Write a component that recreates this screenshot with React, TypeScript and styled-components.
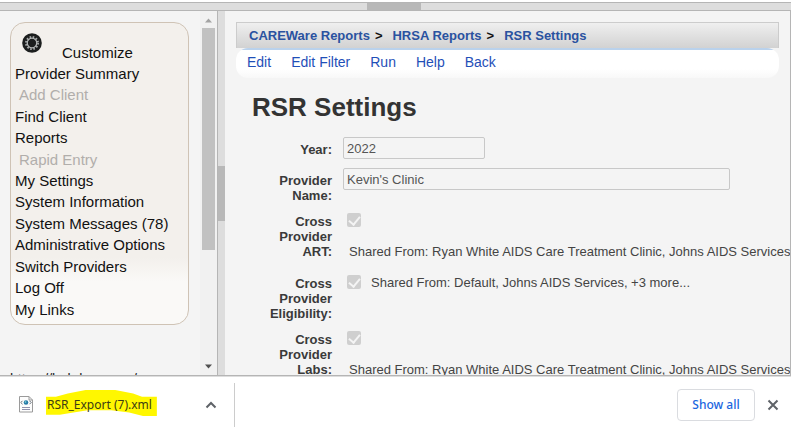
import React from "react";
import styled, { createGlobalStyle } from "styled-components";

const Global = createGlobalStyle`
  * { box-sizing: border-box; }
  html, body { margin: 0; background: #fff; }
  body { font-family: "Liberation Sans", Arial, sans-serif; overflow: hidden; }
  button, input { font-family: inherit; margin: 0; }
`;

const Page = styled.div`
  display: flex;
  flex-direction: column;
  height: 100vh;
  padding-top: 2px;
`;

const Handle = styled.span<{ $vertical?: boolean }>`
  background: #b8b8b8;
  width: ${(p) => (p.$vertical ? "100%" : "54px")};
  height: ${(p) => (p.$vertical ? "55px" : "100%")};
`;

const TopSplitter = styled.div`
  display: flex;
  justify-content: center;
  flex: none;
  height: 9px;
  padding-right: 3px;
  background: #ddd;
  border: solid #b5b5b5;
  border-width: 1px 0;
`;

const SideSplitter = styled.div`
  display: flex;
  align-items: center;
  flex: none;
  width: 8px;
  background: #ddd;
  border-left: 1px solid #b5b5b5;
`;

const Workspace = styled.div`
  display: flex;
  flex: 1;
  min-height: 0;
  border-bottom: 1px solid #b5b5b5;
`;

const Sidebar = styled.aside`
  display: flex;
  flex: none;
  width: 217px;
  background: #f4f4f4;
`;

const SidebarBody = styled.div`
  flex: 1;
  min-width: 0;
  overflow: hidden;
  padding: 11px 11px 0 10px;
`;

const MenuPanel = styled.nav`
  display: flex;
  flex-direction: column;
  min-height: 303px;
  padding: 8px 4px 4px;
  border: 1px solid #cfc3b5;
  border-radius: 15px;
  background: linear-gradient(#f3f0ec 0, #f3f0ec 78%, #faf9f7 86%, #faf9f7);
`;

const MenuHead = styled.div`
  display: flex;
  align-items: flex-start;
  gap: 19px;
  height: 32px;
  padding-left: 6px;
`;

const MenuList = styled.ul`
  display: grid;
  grid-auto-rows: 1fr;
  flex: 1;
  margin: 0;
  padding: 0;
  list-style: none;
`;

const MenuLink = styled.a<{ $muted?: boolean }>`
  display: block;
  padding-left: ${(p) => (p.$muted ? "4px" : "0")};
  font-size: 15px;
  line-height: 21px;
  white-space: nowrap;
  color: ${(p) => (p.$muted ? "#b1aeab" : "#111")};
  text-decoration: none;
`;

const HeadLink = styled(MenuLink)`
  align-self: flex-end;
`;

const StatusUrl = styled.div`
  margin-top: 44px;
  font-size: 14px;
  line-height: 20px;
  white-space: nowrap;
  color: #222;
`;

const ScrollTrack = styled.div`
  display: flex;
  flex-direction: column;
  align-items: center;
  flex: none;
  width: 17px;
  padding: 7px 0 6px;
  background: #f1f1f1;
`;

const ScrollThumb = styled.div`
  width: 13px;
  height: 222px;
  margin: 5px 0 auto;
  background: #c1c1c1;
`;

const Content = styled.main`
  flex: 1;
  min-width: 0;
  overflow: hidden;
  padding: 11px 0 0 11px;
  background: #f4f4f4;
  border-right: 1px solid #b5b5b5;
`;

const Crumbs = styled.nav`
  display: flex;
  align-items: center;
  height: 26px;
  margin-right: 11px;
  padding-left: 12px;
  border: 1px solid #ccc;
  border-bottom: 0;
  background: linear-gradient(#efefef, #d2d2d2);
  font-size: 13px;
  font-weight: bold;
  white-space: nowrap;
`;

const Crumb = styled.a`
  color: #2a52a0;
  text-decoration: none;
`;

const CrumbArrow = styled.span`
  margin: 0 10px 0 5px;
  color: #111;
`;

const Toolbar = styled.div`
  display: flex;
  gap: 20px;
  height: 30px;
  margin-right: 11px;
  padding: 0 11px 2px;
  border-radius: 12px;
  background: linear-gradient(#bad2ec 2px, #fff 2px, #fff 70%, #f8f8f8);
`;

const ToolButton = styled.button`
  padding: 0;
  border: 0;
  background: none;
  font-size: 14px;
  line-height: 24px;
  color: #1f4fb8;
`;

const Title = styled.h1`
  margin: 14px 0 15px 16px;
  font-size: 26px;
  line-height: 30px;
  color: #333;
`;

const Form = styled.form`
  display: grid;
  grid-template-columns: 96px minmax(0, 1fr);
  column-gap: 11px;
  font-size: 13px;
  line-height: 15px;
  color: #444;
`;

const Label = styled.label<{ $bottom: number }>`
  padding: 5px 0 ${(p) => p.$bottom}px 20px;
  font-weight: bold;
  text-align: right;
  color: #3a3a3a;
`;

const Field = styled.div`
  min-width: 0;
`;

const TextInput = styled.input<{ $wide?: boolean }>`
  display: block;
  width: ${(p) => (p.$wide ? "387px" : "142px")};
  max-width: 100%;
  height: 22px;
  padding: 0 3px;
  border: 1px solid #c8c8c8;
  border-radius: 2px;
  background: #f4f4f4;
  font-size: 13px;
  color: #555;
`;

const CheckField = styled(Field)<{ $stacked?: boolean }>`
  display: flex;
  flex-direction: ${(p) => (p.$stacked ? "column" : "row")};
  gap: ${(p) => (p.$stacked ? "17px" : "10px")};
  padding: 4px 0 0 4px;
  white-space: nowrap;
`;

const SharedFrom = styled.span<{ $indent?: boolean }>`
  padding-left: ${(p) => (p.$indent ? "2px" : "0")};
`;

const CheckBox = styled.input`
  appearance: none;
  flex: none;
  width: 14px;
  height: 14px;
  border-radius: 2px;
  background: #cfcfcf;
  display: grid;
  place-items: center;

  &::before {
    content: "";
    width: 9px;
    height: 5px;
    margin-bottom: 2px;
    border: solid #f4f4f4;
    border-width: 0 0 2px 2px;
    transform: rotate(-50deg);
  }
`;

const Shelf = styled.footer`
  display: flex;
  align-items: center;
  flex: none;
  height: 56px;
  border-top: 1px solid #ddd;
  background: #fff;
  font-family: "Noto Sans", "Open Sans", sans-serif;
`;

const Download = styled.div`
  display: flex;
  align-items: center;
  width: 235px;
  height: 44px;
  padding: 0 17px 0 19px;
  border-right: 1px solid #ccc;
`;

const FileLink = styled.a`
  position: relative;
  margin-left: 13px;
  padding: 0 1px;
  font-size: 12px;
  line-height: 18px;
  color: #3c3c14;
  text-decoration: none;
  white-space: nowrap;
`;

const Marker = styled.svg`
  position: absolute;
  inset: -6px -4px -3px 0;
  width: calc(100% + 4px);
  height: calc(100% + 9px);
`;

const FileName = styled.span`
  position: relative;
`;

const IconButton = styled.button`
  display: flex;
  padding: 0;
  border: 0;
  background: none;
`;

const MoreButton = styled(IconButton)`
  margin-left: auto;
`;

const ShowAll = styled.button`
  width: 78px;
  height: 32px;
  margin: 0 12px 0 auto;
  border: 1px solid #dadce0;
  border-radius: 4px;
  background: #fff;
  font-size: 12px;
  font-weight: 500;
  color: #1a66e0;
`;

const CloseButton = styled(IconButton)`
  margin-right: 12px;
`;

const menu: { text: string; muted?: boolean }[] = [
  { text: "Provider Summary" },
  { text: "Add Client", muted: true },
  { text: "Find Client" },
  { text: "Reports" },
  { text: "Rapid Entry", muted: true },
  { text: "My Settings" },
  { text: "System Information" },
  { text: "System Messages (78)" },
  { text: "Administrative Options" },
  { text: "Switch Providers" },
  { text: "Log Off" },
  { text: "My Links" },
];

const GearIcon = () => (
  <svg width="22" height="22" viewBox="0 0 22 22" aria-hidden="true">
    <circle cx="11" cy="12" r="9.8" fill="#1c1e1e" />
    <circle cx="11" cy="12" r="6.1" fill="none" stroke="#a9acac" strokeWidth="1.8" strokeDasharray="1.6 1.594" />
    <circle cx="11" cy="12" r="4.8" fill="none" stroke="#b4b7b7" strokeWidth="1.3" />
  </svg>
);

const XmlFileIcon = () => (
  <svg width="14" height="17" viewBox="0 0 14 17" aria-hidden="true">
    <path d="M.5.5h9.500l3.500 3.500v12H.5z" fill="#fdfdfd" stroke="#9a9a9a" />
    <path d="M10 .5V4h3.500" fill="none" stroke="#9a9a9a" />
    <path d="M3.500 4.800 1.800 6.500l1.700 1.700M10.500 4.800l1.700 1.700-1.700 1.700" fill="none" stroke="#666e78" />
    <circle cx="7" cy="6.500" r="2.300" fill="#2579a8" />
    <circle cx="6.500" cy="6" r=".9" fill="#6fc3c9" />
    <path d="M3 11.500h8M3 13.500h8" stroke="#9292ae" />
  </svg>
);

const App: React.FC = () => (
  <Page>
    <Global />
    <TopSplitter><Handle /></TopSplitter>
    <Workspace>
      <Sidebar>
        <SidebarBody>
          <MenuPanel aria-label="Main">
            <MenuHead>
              <GearIcon />
              <HeadLink href="#customize">Customize</HeadLink>
            </MenuHead>
            <MenuList>
              {menu.map((m) => (
                <li key={m.text}>
                  <MenuLink href="#menu" $muted={m.muted}>{m.text}</MenuLink>
                </li>
              ))}
            </MenuList>
          </MenuPanel>
          <StatusUrl>https://hab.hrsa.gov/</StatusUrl>
        </SidebarBody>
        <ScrollTrack>
          <svg width="7" height="5" viewBox="0 0 7 5" aria-hidden="true"><path d="M0 4.500 3.500.5 7 4.500z" fill="#a3a3a3" /></svg>
          <ScrollThumb />
          <svg width="7" height="5" viewBox="0 0 7 5" aria-hidden="true"><path d="M0 .5h7L3.500 4.500z" fill="#505050" /></svg>
        </ScrollTrack>
      </Sidebar>
      <SideSplitter><Handle $vertical /></SideSplitter>
      <Content>
        <Crumbs aria-label="Breadcrumb">
          <Crumb href="#reports">CAREWare Reports</Crumb>
          <CrumbArrow>&gt;</CrumbArrow>
          <Crumb href="#hrsa">HRSA Reports</Crumb>
          <CrumbArrow>&gt;</CrumbArrow>
          <Crumb href="#rsr">RSR Settings</Crumb>
        </Crumbs>
        <Toolbar>
          {["Edit", "Edit Filter", "Run", "Help", "Back"].map((t) => (
            <ToolButton key={t} type="button">{t}</ToolButton>
          ))}
        </Toolbar>
        <Title>RSR Settings</Title>
        <Form>
          <Label htmlFor="year" $bottom={11}>Year:</Label>
          <Field><TextInput id="year" defaultValue="2022" disabled /></Field>
          <Label htmlFor="provider" $bottom={6}>Provider Name:</Label>
          <Field><TextInput id="provider" defaultValue="Kevin's Clinic" disabled $wide /></Field>
          <Label htmlFor="art" $bottom={12}>Cross Provider ART:</Label>
          <CheckField $stacked>
            <CheckBox id="art" type="checkbox" defaultChecked disabled />
            <SharedFrom $indent>Shared From: Ryan White AIDS Care Treatment Clinic, Johns AIDS Services</SharedFrom>
          </CheckField>
          <Label htmlFor="eligibility" $bottom={6}>Cross Provider Eligibility:</Label>
          <CheckField>
            <CheckBox id="eligibility" type="checkbox" defaultChecked disabled />
            <SharedFrom>Shared From: Default, Johns AIDS Services, +3 more...</SharedFrom>
          </CheckField>
          <Label htmlFor="labs" $bottom={6}>Cross Provider Labs:</Label>
          <CheckField $stacked>
            <CheckBox id="labs" type="checkbox" defaultChecked disabled />
            <SharedFrom $indent>Shared From: Ryan White AIDS Care Treatment Clinic, Johns AIDS Services</SharedFrom>
          </CheckField>
        </Form>
      </Content>
    </Workspace>
    <Shelf>
      <Download>
        <XmlFileIcon />
        <FileLink href="#file">
          <Marker viewBox="0 0 112 24" preserveAspectRatio="none" aria-hidden="true">
            <path d="M0 6h10l12-3 18-3h30l18 3 9 3h15v17H98l-14-3-18-2H42l-22 3-6 1H0z" fill="#fff700" />
          </Marker>
          <FileName>RSR_Export (7).xml</FileName>
        </FileLink>
        <MoreButton type="button" aria-label="More options">
          <svg width="12" height="8" viewBox="0 0 12 8" aria-hidden="true"><path d="m1.500 6.500 4.500-4.500 4.500 4.500" fill="none" stroke="#5f6368" strokeWidth="2" /></svg>
        </MoreButton>
      </Download>
      <ShowAll type="button">Show all</ShowAll>
      <CloseButton type="button" aria-label="Close">
        <svg width="12" height="12" viewBox="0 0 12 12" aria-hidden="true"><path d="m1.500 1.500 9 9m0-9-9 9" fill="none" stroke="#5f6368" strokeWidth="2" /></svg>
      </CloseButton>
    </Shelf>
  </Page>
);

export default App;
